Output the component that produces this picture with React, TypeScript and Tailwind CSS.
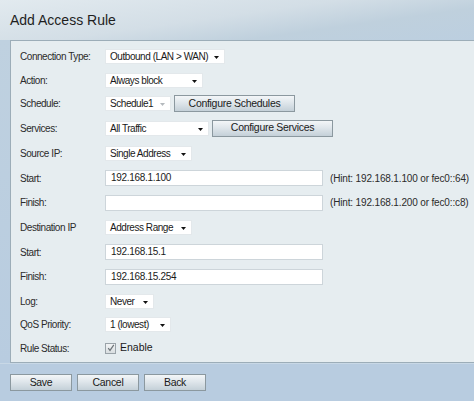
import React from "react";

type Row = {
  label: string;
  h: number;
  kind: "select" | "input" | "check";
  value?: string;
  w?: number;
  disabled?: boolean;
  button?: { text: string; w: number; ml: number };
  hint?: string;
};

const rows: Row[] = [
  { label: "Connection Type:", h: 24, kind: "select", value: "Outbound (LAN > WAN)", w: 120 },
  { label: "Action:", h: 24, kind: "select", value: "Always block", w: 98 },
  {
    label: "Schedule:",
    h: 23,
    kind: "select",
    value: "Schedule1",
    w: 66,
    disabled: true,
    button: { text: "Configure Schedules", w: 121, ml: 3 },
  },
  {
    label: "Services:",
    h: 26,
    kind: "select",
    value: "All Traffic",
    w: 104,
    button: { text: "Configure Services", w: 121, ml: 3 },
  },
  { label: "Source IP:", h: 25, kind: "select", value: "Single Address", w: 87 },
  { label: "Start:", h: 24, kind: "input", value: "192.168.1.100", hint: "(Hint: 192.168.1.100 or fec0::64)" },
  { label: "Finish:", h: 25, kind: "input", value: "", hint: "(Hint: 192.168.1.200 or fec0::c8)" },
  { label: "Destination IP", h: 25, kind: "select", value: "Address Range", w: 87 },
  { label: "Start:", h: 24, kind: "input", value: "192.168.15.1" },
  { label: "Finish:", h: 25, kind: "input", value: "192.168.15.254" },
  { label: "Log:", h: 24, kind: "select", value: "Never", w: 49 },
  { label: "QoS Priority:", h: 23, kind: "select", value: "1 (lowest)", w: 66 },
  { label: "Rule Status:", h: 24, kind: "check", value: "Enable" },
];

function Arrow({ disabled }: { disabled?: boolean }) {
  return (
    <svg width="5" height="3" viewBox="0 0 5 3" className="absolute right-[5px] top-[6px]">
      <path d="M0 0h5L2.5 3z" fill={disabled ? "#b4b9bd" : "#111"} />
    </svg>
  );
}

function Select({ value, w, disabled }: { value?: string; w?: number; disabled?: boolean }) {
  return (
    <div
      className="relative h-[15px] bg-white border border-[#e3e8eb] leading-[13px] pl-[4px] text-[#1a1a1a] tracking-[-0.45px] whitespace-nowrap"
      style={{ width: w }}
    >
      {value}
      <Arrow disabled={disabled} />
    </div>
  );
}

function Button({ text, w, ml }: { text: string; w: number; ml?: number }) {
  return (
    <div
      className="h-[17px] flex items-center justify-center border border-[#8b989f] bg-[linear-gradient(#f3f6f8,#dfe6eb_45%,#c4d0d8)] text-[#1a1a1a] text-[10.5px] tracking-[-0.3px]"
      style={{ width: w, marginLeft: ml }}
    >
      {text}
    </div>
  );
}

export default function App() {
  return (
    <div
      className="w-[474px] h-[401px] overflow-hidden bg-[#b8cce0] text-[10px] text-[#2b2b2b]"
      style={{ fontFamily: '"Liberation Sans", Arial, sans-serif' }}
    >
      <div className="h-[40px] flex items-center pl-[10px] bg-[linear-gradient(172deg,#e2eaef_0%,#d3dee6_45%,#bfd0dd_70%,#bccfe0_100%)]">
        <span className="text-[14px] text-[#1e1e1e] mt-[1px]">Add Access Rule</span>
      </div>
      <div className="bg-[linear-gradient(#bfd1e0,#b8cce0)] pl-[10px]">
        <div className="bg-[#e6edf0] border-t border-l border-b border-[#9cadb8] pt-[3px] pb-[2px]">
          {rows.map((r, i) => (
            <div key={i} className="flex items-center" style={{ height: r.h }}>
              <div className="w-[94px] pl-[9px] shrink-0 tracking-[-0.45px] whitespace-nowrap">{r.label}</div>
              {r.kind === "select" && <Select value={r.value} w={r.w} disabled={r.disabled} />}
              {r.kind === "input" && (
                <div className="w-[218px] h-[16px] bg-white border border-[#cdd5da] leading-[14px] pl-[5px] text-[#1a1a1a] tracking-[-0.3px]">
                  {r.value}
                </div>
              )}
              {r.kind === "check" && (
                <div className="flex items-center">
                  <div className="w-[11px] h-[11px] border border-[#9aa3a9] bg-[linear-gradient(#f2f4f5,#d9dee1)] flex items-center justify-center">
                    <svg width="8" height="8" viewBox="0 0 8 8">
                      <path d="M1.2 4.2l1.8 2.2L6.8 0.8" stroke="#6d7479" strokeWidth="1.2" fill="none" />
                    </svg>
                  </div>
                  <span className="ml-[4px] text-[10.5px] text-[#1a1a1a]">{r.value}</span>
                </div>
              )}
              {r.button && <Button text={r.button.text} w={r.button.w} ml={r.button.ml} />}
              {r.hint && <span className="ml-[7px] text-[10px] tracking-[-0.15px] whitespace-nowrap">{r.hint}</span>}
            </div>
          ))}
        </div>
      </div>
      <div className="flex gap-[5px] pl-[10px] pt-[10px] border-t border-[#c8d8e6]">
        <Button text="Save" w={62} />
        <Button text="Cancel" w={62} />
        <Button text="Back" w={62} />
      </div>
    </div>
  );
}
